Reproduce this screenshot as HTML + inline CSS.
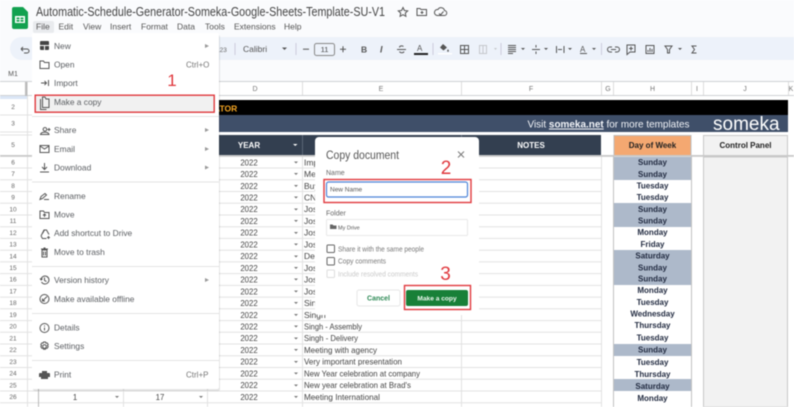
<!DOCTYPE html>
<html><head><meta charset="utf-8"><style>
html,body{margin:0;padding:0;background:#fff;width:794px;height:407px;overflow:hidden}
svg{display:block;filter:blur(.45px)}
text{font-family:"Liberation Sans",sans-serif}
.m{font-size:8.4px;fill:#5b5e62}
.rn{font-size:6.5px;fill:#666;text-anchor:middle}
.y{font-size:7.8px;fill:#444;text-anchor:middle}
.e{font-size:8.5px;fill:#444}
.d{font-size:8px;font-weight:bold;fill:#232c42;text-anchor:middle}
.c{font-size:7px;fill:#777;text-anchor:middle}
.i{fill:none;stroke:#555;stroke-width:1}
.r{fill:none;stroke:#e0393e;stroke-width:1.4}
.l{stroke:#e2e2e2;stroke-width:1}
.a{fill:#777}
</style></head><body>
<svg width="794" height="407" viewBox="0 0 794 407" xmlns="http://www.w3.org/2000/svg">
<rect width="794" height="81" fill="#fafbfd"/>
<rect x="10" y="37" width="800" height="23" rx="11.5" fill="#edf2fa"/>
<!-- logo -->
<path d="M14 7h9l5 5v15a2 2 0 0 1-2 2H14a2 2 0 0 1-2-2V9a2 2 0 0 1 2-2z" fill="#12a150"/>
<rect x="15" y="16" width="10" height="7" fill="#fff"/><rect x="16.5" y="17.5" width="3" height="1.7" fill="#12a150"/><rect x="20.5" y="17.5" width="3" height="1.7" fill="#12a150"/><rect x="16.5" y="20" width="3" height="1.7" fill="#12a150"/><rect x="20.5" y="20" width="3" height="1.7" fill="#12a150"/>
<text x="36" y="16" font-size="13" fill="#444" textLength="349" lengthAdjust="spacingAndGlyphs">Automatic-Schedule-Generator-Someka-Google-Sheets-Template-SU-V1</text>
<path class="i" d="M403 7.5l1.4 3 3.3.4-2.4 2.2.6 3.2-2.9-1.6-2.9 1.6.6-3.2-2.4-2.2 3.3-.4z"/>
<path class="i" d="M417 8.5h3l1 1h5.500v6h-9.500zM422 11v3M420.500 12.500h3"/>
<path class="i" d="M437 15.500h7a2.500 2.500 0 0 0 .5-5 3.500 3.500 0 0 0-6.500-1 3 3 0 0 0-1 6zM439 13.500l1.500 1.500 3-3.500"/>
<rect x="33" y="21" width="21" height="12" rx="2" fill="#e9ebee"/>
<g font-size="8.500" fill="#555">
<text x="36" y="29.500">File</text><text x="58.500" y="29.500">Edit</text><text x="83" y="29.500">View</text><text x="110" y="29.500">Insert</text><text x="141" y="29.500">Format</text><text x="177" y="29.500">Data</text><text x="205" y="29.500">Tools</text><text x="234" y="29.500">Extensions</text><text x="284" y="29.500">Help</text>
</g>
<!-- toolbar -->
<path class="i" d="M21 49h6a2 2 0 0 1 0 4h-3M21 49l2-2M21 49l2 2"/>
<text x="216" y="52" font-size="6.500" fill="#666">123</text>
<line x1="235" y1="43" x2="235" y2="55" stroke="#ccd"/>
<text x="243" y="52" font-size="8.500" fill="#555">Calibri</text>
<path d="M282 47.500h5l-2.500 2.500z" fill="#555"/>
<line x1="296" y1="43" x2="296" y2="55" stroke="#ccd"/>
<rect x="303" y="48.700" width="6" height="1" fill="#555"/>
<rect x="314.500" y="43.500" width="20" height="12" rx="2" fill="none" stroke="#888"/>
<text x="324.500" y="52" font-size="7.500" fill="#444" text-anchor="middle">11</text>
<path d="M340 49.200h6M343 46.200v6" stroke="#555" fill="none"/>
<text x="361" y="52.500" font-size="8.500" font-weight="bold" fill="#555">B</text>
<text x="380" y="52.500" font-size="9" font-style="italic" font-weight="bold" fill="#555">I</text>
<path class="i" d="M397 49.500h9M403.500 46.500c-2-1.200-4-.5-4 1M399.500 51.500c.5 1.500 4 1.800 4.500 0"/>
<text x="417" y="51" font-size="8" fill="#555">A</text><rect x="414" y="53" width="14" height="2" fill="#222"/>
<line x1="433" y1="43" x2="433" y2="55" stroke="#ccd"/>
<path d="M443 44l-3 3.500 3.500 3 3.500-3zM448 49l1 2-1 1-1-1z" fill="#555"/><rect x="438" y="53" width="14" height="1.500" fill="#fff"/>
<path class="i" d="M460.500 45.500h8v8h-8zM464.500 45.500v8M460.500 49.500h8"/>
<path d="M479.500 45.500h7v8h-7zM483 45.500v8" fill="none" stroke="#c5c8cc"/>
<path d="M494 48h3l-1.500 2z" fill="#c5c8cc"/>
<line x1="501" y1="43" x2="501" y2="55" stroke="#ccd"/>
<path class="i" d="M508 45.500h8M508 47.500h8M508 49.500h8M508 51.500h8M508 53.500h5"/>
<path d="M521 48h4l-2 2z" fill="#555"/>
<path class="i" d="M532 49.500h8M536 45v2.500M536 51.500V54"/>
<path d="M544 48h4l-2 2z" fill="#555"/>
<path class="i" d="M556.500 46v7M564 46v7M558 49.500h4"/>
<path d="M568 48h4l-2 2z" fill="#555"/>
<text x="580" y="52" font-size="8" fill="#555">A</text><rect x="580" y="53" width="7" height="1" fill="#555"/>
<path d="M592 48h4l-2 2z" fill="#555"/>
<line x1="601.500" y1="43" x2="601.500" y2="55" stroke="#ccd"/>
<path class="i" d="M612 47h-2a2.500 2.500 0 0 0 0 5h2M615 47h2a2.500 2.500 0 0 1 0 5h-2M611 49.500h5"/>
<path class="i" d="M627 45h8v7h-5l-3 2.500zM631 46.500v4M629 48.500h4"/>
<path class="i" d="M646 45.500h8v8h-8zM648 52v-2M650 52v-4M652 52v-3"/>
<path class="i" d="M665 46h7l-2.500 3.500v3.500h-2v-3.500z"/>
<path d="M678 48h4l-2 2z" fill="#555"/>
<path class="i" d="M696.500 46h-4.500l2.500 3.500-2.500 3.500h4.500"/>
<text x="13" y="76" font-size="7" fill="#555" text-anchor="middle">M1</text>
<!-- sheet headers -->
<rect y="81" width="794" height="326" fill="#fff"/>
<line x1="0" y1="81.500" x2="794" y2="81.500" stroke="#cfd1d4"/>
<line x1="0" y1="95.500" x2="794" y2="95.500" stroke="#cfd1d4"/>
<rect x="25" y="82" width="2.500" height="14" fill="#bbb"/>
<rect x="0" y="96" width="27" height="3" fill="#dbe6f6"/>
<g stroke="#dcdcdc">
<line x1="302.500" y1="82" x2="302.500" y2="95"/><line x1="461.500" y1="82" x2="461.500" y2="95"/><line x1="601.500" y1="82" x2="601.500" y2="95"/><line x1="613.500" y1="82" x2="613.500" y2="95"/><line x1="691.500" y1="82" x2="691.500" y2="95"/><line x1="703.500" y1="82" x2="703.500" y2="95"/><line x1="788.500" y1="82" x2="788.500" y2="95"/>
</g>
<text class="c" x="255" y="91">D</text><text class="c" x="381" y="91">E</text><text class="c" x="531" y="91">F</text><text class="c" x="608" y="91">G</text><text class="c" x="652.500" y="91">H</text><text class="c" x="697" y="91">I</text><text class="c" x="745" y="91">J</text><text class="c" x="791" y="91">K</text>
<!-- grid lines -->
<g class="l">
<line x1="0" y1="168" x2="601" y2="168"/><line x1="0" y1="179.800" x2="601" y2="179.800"/><line x1="0" y1="191.500" x2="601" y2="191.500"/><line x1="0" y1="203.200" x2="601" y2="203.200"/><line x1="0" y1="215" x2="601" y2="215"/><line x1="0" y1="226.700" x2="601" y2="226.700"/><line x1="0" y1="238.400" x2="601" y2="238.400"/><line x1="0" y1="250.200" x2="601" y2="250.200"/><line x1="0" y1="261.900" x2="601" y2="261.900"/><line x1="0" y1="273.600" x2="601" y2="273.600"/><line x1="0" y1="285.400" x2="601" y2="285.400"/><line x1="0" y1="297.100" x2="601" y2="297.100"/><line x1="0" y1="308.800" x2="601" y2="308.800"/><line x1="0" y1="320.600" x2="601" y2="320.600"/><line x1="0" y1="332.300" x2="601" y2="332.300"/><line x1="0" y1="344" x2="601" y2="344"/><line x1="0" y1="355.800" x2="601" y2="355.800"/><line x1="0" y1="367.500" x2="601" y2="367.500"/><line x1="0" y1="379.200" x2="601" y2="379.200"/><line x1="0" y1="391" x2="601" y2="391"/><line x1="0" y1="402.700" x2="601" y2="402.700"/>
<line x1="0" y1="115" x2="32" y2="115"/><line x1="0" y1="132" x2="32" y2="132"/><line x1="0" y1="135" x2="32" y2="135"/>
<line x1="27.500" y1="96" x2="27.500" y2="407"/><line x1="38.500" y1="156" x2="38.500" y2="407" style="stroke:#bbb"/><line x1="123.500" y1="156" x2="123.500" y2="407"/><line x1="207.500" y1="156" x2="207.500" y2="407"/><line x1="302.500" y1="156" x2="302.500" y2="407"/><line x1="461.500" y1="156" x2="461.500" y2="407"/><line x1="601.500" y1="156" x2="601.500" y2="407"/>
</g>
<g class="rn">
<text x="13" y="109">2</text><text x="13" y="125.500">3</text><text x="13" y="147">5</text>
<text x="13" y="164.500">6</text><text x="13" y="176">7</text><text x="13" y="188">8</text><text x="13" y="199.500">9</text><text x="13" y="211.500">10</text><text x="13" y="223">11</text><text x="13" y="235">12</text><text x="13" y="246.500">13</text><text x="13" y="258.500">14</text><text x="13" y="270">15</text><text x="13" y="281.500">16</text><text x="13" y="293.500">17</text><text x="13" y="305">18</text><text x="13" y="317">19</text><text x="13" y="328.500">20</text><text x="13" y="340.500">21</text><text x="13" y="352">22</text><text x="13" y="364">23</text><text x="13" y="375.500">24</text><text x="13" y="387.500">25</text><text x="13" y="399">26</text>
</g>
<!-- banners -->
<rect x="32" y="100" width="756" height="15" fill="#000"/>
<rect x="32" y="115" width="756" height="17" fill="#3f4f69"/>
<text x="214" y="111.500" font-size="8.500" font-weight="bold" fill="#f4a522">ATOR</text>
<text x="527.500" y="127.500" font-size="10.500" fill="#f2f4f8" textLength="162" lengthAdjust="spacingAndGlyphs">Visit <tspan font-weight="bold" text-decoration="underline">someka.net</tspan> for more templates</text>
<text x="713" y="130" font-size="19" fill="#fff">someka</text>
<rect x="32" y="135" width="569" height="20" fill="#333f50"/>
<line x1="302.500" y1="135" x2="302.500" y2="155" stroke="#5b6676"/><line x1="461.500" y1="135" x2="461.500" y2="155" stroke="#5b6676"/><line x1="207.500" y1="135" x2="207.500" y2="155" stroke="#5b6676"/>
<text x="249" y="148" font-size="8" font-weight="bold" fill="#fff" text-anchor="middle">YEAR</text>
<path d="M293 144h4.500l-2.250 2z" fill="#fff"/>
<text x="531" y="148" font-size="8" font-weight="bold" fill="#fff" text-anchor="middle">NOTES</text>
<rect x="614" y="135.500" width="77" height="20" fill="#f4a871" stroke="#bdbdbd"/>
<text x="652.500" y="148" font-size="8" font-weight="bold" fill="#222" text-anchor="middle">Day of Week</text>
<rect x="703.500" y="135.500" width="84" height="20" fill="#f2f2f2" stroke="#c8c8c8"/>
<text x="745.500" y="148" font-size="8" font-weight="bold" fill="#222" text-anchor="middle">Control Panel</text>
<rect x="0" y="155" width="794" height="1.800" fill="#c9c9c9"/>
<rect x="703.500" y="157" width="84" height="250" fill="#f2f2f2" stroke="#c8c8c8"/>
<!-- day of week -->
<rect x="614" y="157" width="77" height="250" fill="#fff"/>
<rect x="614" y="157" width="77" height="23" fill="#adb9ca"/>
<rect x="614" y="203" width="77" height="24" fill="#adb9ca"/>
<rect x="614" y="250" width="77" height="35" fill="#adb9ca"/>
<rect x="614" y="344" width="77" height="12" fill="#adb9ca"/>
<rect x="614" y="379" width="77" height="12" fill="#adb9ca"/>
<line x1="613.500" y1="156" x2="613.500" y2="407" stroke="#c2c2c2"/><line x1="691.500" y1="156" x2="691.500" y2="407" stroke="#c2c2c2"/>
<g class="d">
<text x="652.500" y="165">Sunday</text><text x="652.500" y="177">Sunday</text><text x="652.500" y="188.500">Tuesday</text><text x="652.500" y="200">Tuesday</text><text x="652.500" y="212">Sunday</text><text x="652.500" y="223.500">Sunday</text><text x="652.500" y="235">Monday</text><text x="652.500" y="247">Friday</text><text x="652.500" y="258.500">Saturday</text><text x="652.500" y="270.500">Sunday</text><text x="652.500" y="281.500">Sunday</text><text x="652.500" y="293">Monday</text><text x="652.500" y="305">Tuesday</text><text x="652.500" y="316.500">Wednesday</text><text x="652.500" y="328">Thursday</text><text x="652.500" y="340.500">Tuesday</text><text x="652.500" y="352.500">Sunday</text><text x="652.500" y="365">Tuesday</text><text x="652.500" y="377">Thursday</text><text x="652.500" y="389">Saturday</text><text x="652.500" y="401">Monday</text>
</g>
<!-- year col -->
<g class="y">
<text x="249" y="165.500">2022</text><text x="249" y="177">2022</text><text x="249" y="188.800">2022</text><text x="249" y="200.500">2022</text><text x="249" y="212.200">2022</text><text x="249" y="224">2022</text><text x="249" y="235.700">2022</text><text x="249" y="247.400">2022</text><text x="249" y="259.100">2022</text><text x="249" y="270.900">2022</text><text x="249" y="282.600">2022</text><text x="249" y="294.300">2022</text><text x="249" y="306">2022</text><text x="249" y="317.800">2022</text><text x="249" y="329.500">2022</text><text x="249" y="341.200">2022</text><text x="249" y="353">2022</text><text x="249" y="364.700">2022</text><text x="249" y="376.400">2022</text><text x="249" y="388.100">2022</text><text x="249" y="399.900">2022</text>
<text x="75" y="399.900">1</text><text x="160" y="399.900">17</text>
</g>
<path class="a" d="M294 161.500h4l-2 2zM294 173h4l-2 2zM294 185h4l-2 2zM294 196.500h4l-2 2zM294 208.500h4l-2 2zM294 220h4l-2 2zM294 232h4l-2 2zM294 243.500h4l-2 2zM294 255.500h4l-2 2zM294 267h4l-2 2zM294 278.500h4l-2 2zM294 290.500h4l-2 2zM294 302h4l-2 2zM294 314h4l-2 2zM294 325.500h4l-2 2zM294 337.500h4l-2 2zM294 349h4l-2 2zM294 361h4l-2 2zM294 372.500h4l-2 2zM294 384.500h4l-2 2zM294 396h4l-2 2zM115 396h4l-2 2zM199 396h4l-2 2z"/>
<g class="e">
<text x="304" y="165.500">Important</text><text x="304" y="177">Meeting</text><text x="304" y="188.800">Buy</text><text x="304" y="200.500">CNC</text><text x="304" y="212.200">Jos</text><text x="304" y="224">Jos</text><text x="304" y="235.700">Jos</text><text x="304" y="247.400">Jos</text><text x="304" y="259.100">Dea</text><text x="304" y="270.900">Jos</text><text x="304" y="282.600">Jos</text><text x="304" y="294.300">Jos</text><text x="304" y="306">Sin</text><text x="304" y="317.800">Singh</text>
<text x="304" y="329.500" textLength="58" lengthAdjust="spacingAndGlyphs">Singh - Assembly</text><text x="304" y="341.200" textLength="54" lengthAdjust="spacingAndGlyphs">Singh - Delivery</text><text x="304" y="353" textLength="73" lengthAdjust="spacingAndGlyphs">Meeting with agency</text><text x="304" y="364.700" textLength="98" lengthAdjust="spacingAndGlyphs">Very important presentation</text><text x="304" y="376.400" textLength="116" lengthAdjust="spacingAndGlyphs">New Year celebration at company</text><text x="304" y="388.100" textLength="107" lengthAdjust="spacingAndGlyphs">New year celebration at Brad's</text><text x="304" y="399.900" textLength="76" lengthAdjust="spacingAndGlyphs">Meeting International</text>
</g>
<!-- File menu -->
<rect x="33" y="34" width="187" height="356" rx="2" fill="#000" opacity=".1" transform="translate(0 1)"/>
<rect x="32" y="33" width="187" height="356" rx="2" fill="#fff"/>
<rect x="36" y="95.500" width="178" height="16.500" fill="#f1f1f1"/>
<g stroke="#e4e4e4"><line x1="32" y1="116.500" x2="219" y2="116.500"/><line x1="32" y1="182" x2="219" y2="182"/><line x1="32" y1="266.500" x2="219" y2="266.500"/><line x1="32" y1="313.500" x2="219" y2="313.500"/><line x1="32" y1="360.500" x2="219" y2="360.500"/></g>
<g class="m">
<text x="54" y="49">New</text><text x="54" y="67.500">Open</text><text x="54" y="86">Import</text><text x="54" y="105">Make a copy</text><text x="54" y="133">Share</text><text x="54" y="152">Email</text><text x="54" y="170.500">Download</text><text x="54" y="199">Rename</text><text x="54" y="217.500">Move</text><text x="54" y="236">Add shortcut to Drive</text><text x="54" y="255">Move to trash</text><text x="54" y="283">Version history</text><text x="54" y="302">Make available offline</text><text x="54" y="330.500">Details</text><text x="54" y="349">Settings</text><text x="54" y="377.500">Print</text>
</g>
<text x="186" y="67.500" font-size="8" fill="#777">Ctrl+O</text><text x="186" y="377.500" font-size="8" fill="#777">Ctrl+P</text>
<path d="M205 44l4 2-4 2zM205 128l4 2-4 2zM205 147l4 2-4 2zM205 165.500l4 2-4 2zM205 278l4 2-4 2z" fill="#999"/>
<!-- menu icons -->
<rect x="40" y="41" width="9" height="9" rx="1" fill="#444"/><path d="M44.500 45.500v4.500M40 45.500h9" stroke="#fff"/>
<path class="i" d="M40 61h3.500l1 1.500H49v6h-9z"/>
<path class="i" d="M41 83h5M44.500 81l2 2-2 2M48.500 80v6"/>
<path class="i" d="M42.500 99v8.500H49V99h-3l-1-2h-2.500zM40.500 99v10.500h6"/>
<path class="i" d="M45 127.500a1.800 1.800 0 1 1-.1 0zM40.500 134.500c.5-3 8-3 8.500 0zM49 128v3M47.500 129.500h3"/>
<path class="i" d="M40 145.500h9v7h-9zM40 146l4.500 3 4.500-3"/>
<path class="i" d="M44.500 163v6M42 167l2.500 2.500 2.500-2.500M40 172h9"/>
<path class="i" d="M40 199.500l1-3 4-3 1.500 1.500-4 3.500zM44 199.500h5"/>
<path class="i" d="M40 211h3.500l1 1.500H49v6h-9zM44.500 217v-3M43 215.500l1.500-1.500 1.500 1.500"/>
<path class="i" d="M41 236l3-6h2.500l2.500 4.500M41 236l1.500 2.500h4M44.500 230l-2 3.500M48.500 236v3M47 237.500h3"/>
<path class="i" d="M42 250h5v7h-5zM41 249h7M43.500 248h2M43.500 251.500v4M45.500 251.500v4"/>
<path class="i" d="M41 279.500a4 4 0 1 1 .5 2.500M40 278.500l1.200 1.500 1.300-1.200M44.500 277.500v3l2 1"/>
<circle class="i" cx="44.500" cy="299" r="4.500"/><path class="i" d="M47 296.500l-4.500 4.500M42.500 298.500v2.500h2.500"/>
<circle class="i" cx="44.500" cy="328" r="4.500"/><path class="i" d="M44.500 327.500v3M44.500 325.500v1"/>
<circle class="i" cx="44.500" cy="346.500" r="1.800"/><path class="i" d="M43.500 342h2l.4 1.200 1.300-.3 1 1.700-.8 1 .8 1-1 1.700-1.300-.3-.4 1.200h-2l-.4-1.200-1.300.3-1-1.700.8-1-.8-1 1-1.700 1.300.3z"/>
<path d="M42 371h5v2h2a1 1 0 0 1 1 1v3h-2v2h-7v-2h-2v-3a1 1 0 0 1 1-1h2z" fill="#555"/>
<rect x="35.200" y="95.200" width="179" height="17" class="r"/>
<text x="172" y="86" font-size="17" fill="#e0393e" text-anchor="middle">1</text>
<!-- dialog -->
<rect x="315" y="137" width="164" height="178" rx="4" fill="#fff"/>
<text x="326" y="159" font-size="11.500" fill="#555" textLength="73" lengthAdjust="spacingAndGlyphs">Copy document</text>
<path d="M458 151.500l6 6M464 151.500l-6 6" stroke="#777" fill="none"/>
<text x="326" y="175" font-size="7" fill="#666">Name</text>
<rect x="326.500" y="182" width="141" height="15" rx="2" fill="#fff" stroke="#4d84d8" stroke-width="1.200"/>
<text x="330" y="191.500" font-size="6.500" fill="#555">New Name</text>
<rect x="324" y="179.500" width="147" height="23" class="r"/>
<text x="326" y="215.500" font-size="7" fill="#666">Folder</text>
<rect x="326.500" y="219.500" width="141" height="16" rx="1" fill="#fff" stroke="#e8e8e8"/>
<path d="M330 224.500h2.500l1 1h3v3.500H330z" fill="#666"/>
<text x="338" y="229.500" font-size="5.500" fill="#555">My Drive</text>
<rect x="327" y="245" width="7.500" height="7.500" rx="1" fill="#fff" stroke="#666"/>
<rect x="327" y="257.500" width="7.500" height="7.500" rx="1" fill="#fff" stroke="#666"/>
<rect x="327" y="270" width="7.500" height="7.500" rx="1" fill="#fff" stroke="#ddd"/>
<text x="338" y="251.500" font-size="7" fill="#777" textLength="86" lengthAdjust="spacingAndGlyphs">Share it with the same people</text>
<text x="338" y="263.500" font-size="7" fill="#777" textLength="48" lengthAdjust="spacingAndGlyphs">Copy comments</text>
<text x="338" y="276.500" font-size="7" fill="#c9c9c9" textLength="80" lengthAdjust="spacingAndGlyphs">Include resolved comments</text>
<rect x="357" y="290" width="43" height="16" rx="2" fill="#fff" stroke="#e6e6e6"/>
<text x="378.500" y="300.500" font-size="7" font-weight="bold" fill="#2e8a56" text-anchor="middle">Cancel</text>
<rect x="406" y="290" width="62" height="16" rx="2" fill="#188038"/>
<text x="437" y="300.500" font-size="6.600" font-weight="bold" fill="#eef7f0" text-anchor="middle">Make a copy</text>
<rect x="404.500" y="285.500" width="66" height="24" class="r"/>
<text x="446" y="174" font-size="19" fill="#e0393e" text-anchor="middle">2</text>
<text x="445.500" y="280" font-size="19" fill="#e0393e" text-anchor="middle">3</text>
</svg>
</body></html>
